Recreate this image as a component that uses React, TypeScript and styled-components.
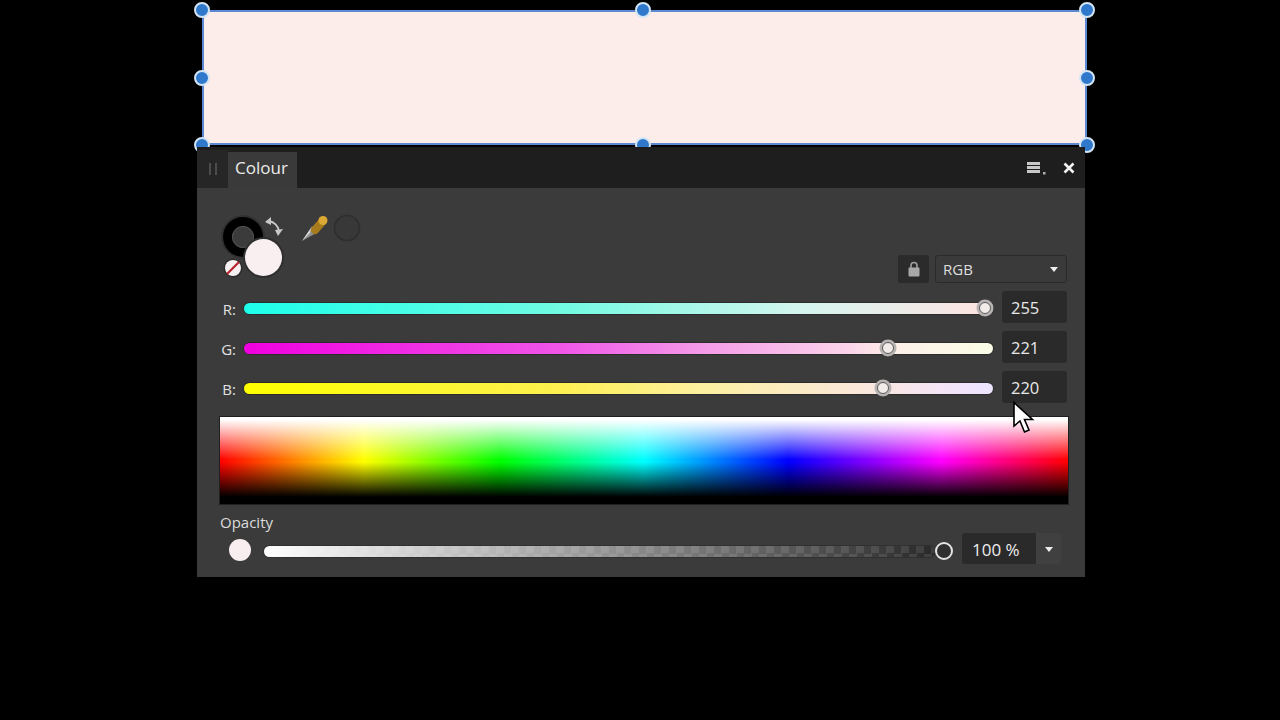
import React from "react";
import styled, { createGlobalStyle } from "styled-components";

const GlobalStyle = createGlobalStyle`
  html, body {
    margin: 0;
    padding: 0;
    background: #000;
    overflow: hidden;
  }
  body {
    font-family: "Open Sans", "Noto Sans", "Liberation Sans", sans-serif;
  }
`;

const Stage = styled.div`
  width: 1280px;
  height: 720px;
  padding: 10px 0 0 197px;
  box-sizing: border-box;
  background: #000;
  position: relative;
  overflow: hidden;
`;

const Shape = styled.div`
  position: relative;
  margin-left: 5px;
  width: 885px;
  height: 135px;
  background: #fcedeb;
  box-shadow: inset 0 0 0 2px #5b8ad2;
`;

const Handle = styled.span<{ $x: number; $y: number }>`
  position: absolute;
  left: ${({ $x }) => $x}%;
  top: ${({ $y }) => $y}%;
  width: 12px;
  height: 12px;
  transform: translate(-50%, -50%);
  border-radius: 50%;
  background: #2f78cb;
  border: 2px solid #d4e5f6;
`;

const Panel = styled.section`
  position: relative;
  z-index: 1;
  margin-top: 2px;
  width: 888px;
  height: 430px;
  background: #3b3b3b;
  color: #e6e6e6;
`;

const PanelHeader = styled.header`
  display: flex;
  align-items: stretch;
  height: 41px;
  box-sizing: border-box;
  background: #1e1e1e;
`;

const Grip = styled.div`
  width: 31px;
  margin-top: 3px;
  background: #262626;
  display: flex;
  align-items: center;
  justify-content: center;
  gap: 4px;
  i {
    width: 2px;
    height: 12px;
    background: #4c4c4c;
  }
`;

const Tab = styled.div`
  width: 69px;
  margin-top: 5px;
  box-sizing: border-box;
  padding-left: 7px;
  background: #3a3a3a;
  font-size: 17px;
  line-height: 31px;
  color: #ececec;
`;

const HeaderTools = styled.div`
  margin-left: auto;
  padding-right: 10px;
  display: flex;
  align-items: center;
  gap: 17px;
`;

const PanelBody = styled.div`
  padding: 24px 17px 0 23px;
`;

const TopRow = styled.div`
  display: flex;
  justify-content: space-between;
  align-items: flex-end;
  height: 71px;
  margin-bottom: 8px;
`;

const ModeControls = styled.div`
  display: flex;
  align-items: center;
  gap: 6px;
  height: 28px;
  margin-right: 1px;
`;

const LockButton = styled.div`
  width: 31px;
  height: 28px;
  border-radius: 2px;
  background: #2b2b2b;
  display: flex;
  align-items: center;
  justify-content: center;
`;

const ModeSelect = styled.div`
  box-sizing: border-box;
  width: 132px;
  height: 28px;
  padding: 0 8px 0 7px;
  border-radius: 3px;
  background: #3a3a3a;
  border: 1px solid #2a2a2a;
  display: flex;
  align-items: center;
  justify-content: space-between;
  font-size: 15px;
  color: #dedede;
`;

const Caret = styled.span`
  width: 0;
  height: 0;
  border-left: 4.5px solid transparent;
  border-right: 4.5px solid transparent;
  border-top: 5px solid #eee;
`;

const Sliders = styled.div`
  display: flex;
  flex-direction: column;
  gap: 8px;
`;

const SliderRow = styled.div`
  display: grid;
  grid-template-columns: 16px 749px 66px;
  column-gap: 8px;
  align-items: center;
  height: 32px;
`;

const ChannelLabel = styled.label`
  text-align: right;
  font-size: 15px;
  color: #e2e2e2;
  padding-top: 4px;
`;

const Track = styled.div<{ $stops: string }>`
  position: relative;
  height: 11px;
  margin-top: 2px;
  border-radius: 6px;
  background: linear-gradient(to right, ${({ $stops }) => $stops});
  box-shadow: 0 0 0 1px rgba(0, 0, 0, 0.25);
`;

const Thumb = styled.span`
  position: absolute;
  top: 50%;
  width: 10px;
  height: 10px;
  transform: translate(-50%, -50%);
  border-radius: 50%;
  background: #f1ece9;
  border: 1.5px solid #5a5a5a;
  box-shadow: 0 0 0 2.5px #b8b4b4;
`;

const ValueBox = styled.div`
  box-sizing: border-box;
  height: 32px;
  margin-left: 1px;
  padding-left: 9px;
  border-radius: 3px;
  background: #2a2a2a;
  font-size: 16.5px;
  line-height: 33px;
  color: #e8e8e8;
`;

const Spectrum = styled.div`
  margin-top: 14px;
  height: 87px;
  box-sizing: border-box;
  box-shadow: 0 0 0 1px #202020;
  background:
    linear-gradient(to bottom, #fff 3%, rgba(255, 255, 255, 0) 49%, rgba(0, 0, 0, 0) 52%, #000 92%),
    linear-gradient(
      to right,
      #f00 0%,
      #ff0 17%,
      #0f0 33%,
      #0ff 50%,
      #00f 67%,
      #f0f 85%,
      #f00 100%
    );
`;

const OpacityLabel = styled.div`
  margin-top: 9px;
  height: 20px;
  font-size: 15px;
  line-height: 19px;
  color: #dcdcdc;
`;

const OpacityRow = styled.div`
  display: flex;
  align-items: center;
  height: 31px;
  padding-left: 9px;
`;

const OpacitySwatch = styled.span`
  width: 22px;
  height: 22px;
  margin-top: 2px;
  border-radius: 50%;
  background: #f8edef;
  flex: none;
`;

const OpacityTrack = styled.div`
  position: relative;
  margin: 6px 0 0 13px;
  width: 671px;
  height: 11px;
  border-radius: 6px;
  box-shadow: 0 0 0 1px #303030;
  background:
    linear-gradient(to right, #fff 0%, rgba(255, 255, 255, 0) 100%),
    repeating-conic-gradient(#3e3e3e 0% 25%, #2a2a2a 0% 50%) 0 0 / 15px 15px;
`;

const OpacityThumb = styled.span`
  position: absolute;
  right: -18px;
  top: 50%;
  width: 14px;
  height: 14px;
  transform: translateY(calc(-50% - 1px));
  border-radius: 50%;
  background: #303030;
  border: 2px solid #e4e4e4;
`;

const OpacityValue = styled.div`
  margin-left: 27px;
  display: flex;
  height: 31px;
  border-radius: 3px;
  overflow: hidden;
`;

const OpacityNumber = styled.div`
  width: 74px;
  box-sizing: border-box;
  padding-left: 10px;
  background: #2a2a2a;
  font-size: 17px;
  line-height: 33px;
  color: #eee;
`;

const OpacityDrop = styled.div`
  width: 25px;
  padding-top: 2px;
  box-sizing: border-box;
  background: #404040;
  display: flex;
  align-items: center;
  justify-content: center;
`;

const Pointer = styled.svg`
  position: absolute;
  left: 1012px;
  top: 401px;
  z-index: 2;
`;

const handles = [
  [0, 0],
  [49.8, 0],
  [100, 0],
  [0, 50],
  [100, 50],
  [0, 100],
  [49.8, 100],
  [100, 100],
];

const channels = [
  {
    name: "R",
    value: 255,
    stops: "#1dffea 0%, #70fbe2 42%, #d4f5ee 74%, #ecebe8 88%, #ffe3e0 100%",
    at: 98.9,
  },
  {
    name: "G",
    value: 221,
    stops: "#f000e0 0%, #f055e8 42%, #f49ae8 61%, #fbd5ea 81%, #fdf0e8 87%, #fafde8 100%",
    at: 86,
  },
  {
    name: "B",
    value: 220,
    stops: "#ffff00 0%, #fdf050 42%, #fdf0a0 61%, #fbe8d8 81%, #f4e4f8 94%, #ece4ff 100%",
    at: 85.3,
  },
];

function ColourWell() {
  return (
    <svg width="142" height="70" viewBox="0 0 142 70">
      {/* stroke ring */}
      <circle cx="23" cy="24" r="21" fill="none" stroke="#303030" strokeWidth="1.5" />
      <circle cx="23" cy="24" r="15.5" fill="none" stroke="#000" strokeWidth="9" />
      <circle cx="23" cy="24" r="10.5" fill="#3b3b3b" stroke="#505050" strokeWidth="1" />
      {/* swap arrows */}
      <path d="M49 8 C54 9 58 13 59 18" fill="none" stroke="#c8c8c8" strokeWidth="2" />
      <path d="M45 9 L51 4 L51 12 Z M55 17 L63 16 L58 23 Z" fill="#c8c8c8" />
      {/* fill colour */}
      <circle cx="43.5" cy="44.5" r="20.5" fill="#2f2f2f" />
      <circle cx="43.5" cy="44.5" r="18.5" fill="#f9eef0" />
      {/* none swatch */}
      <circle cx="13" cy="55" r="9.5" fill="#2c2c2c" />
      <circle cx="13" cy="55" r="8" fill="#f6f0f0" />
      <path d="M7 61 L19 49" stroke="#b8212c" strokeWidth="2.2" />
      {/* eyedropper */}
      <path d="M82 28 L92 13 L98 19 Z" fill="#8f8f8f" />
      <path d="M82 28 L91 15 L90 20 Z" fill="#d8d8d8" />
      <path d="M95 17 L102 9" stroke="#a87c1c" strokeWidth="8" strokeLinecap="round" />
      <circle cx="103" cy="7.5" r="4.5" fill="#dcaa34" />
      {/* empty sample */}
      <circle cx="127" cy="15" r="12.5" fill="#383838" stroke="#2e2e2e" strokeWidth="1.6" />
    </svg>
  );
}

function MenuIcon() {
  return (
    <svg width="19" height="14" viewBox="0 0 19 14">
      <path d="M0 1h13v3H0zM0 5h13v3H0zM0 9h13v3H0z" fill="#c8c8c8" />
      <rect x="16" y="11" width="2.5" height="2.5" fill="#b0b0b0" />
    </svg>
  );
}

function CloseIcon() {
  return (
    <svg width="12" height="12" viewBox="0 0 12 12">
      <path d="M1.5 1.5L10.5 10.5M10.5 1.5L1.5 10.5" stroke="#f2f2f2" strokeWidth="2.6" />
    </svg>
  );
}

function LockIcon() {
  return (
    <svg width="12" height="16" viewBox="0 0 12 16">
      <path d="M3 7V4.5a3 3 0 0 1 6 0V7" fill="none" stroke="#a0a0a0" strokeWidth="1.6" />
      <rect x="0.5" y="6.5" width="11" height="9" rx="1" fill="#a8a8a8" />
    </svg>
  );
}

export default function App() {
  return (
    <>
      <GlobalStyle />
      <Stage>
        <Shape>
          {handles.map(([x, y]) => (
            <Handle key={`${x}-${y}`} $x={x} $y={y} />
          ))}
        </Shape>
        <Panel>
          <PanelHeader>
            <Grip>
              <i />
              <i />
            </Grip>
            <Tab>Colour</Tab>
            <HeaderTools>
              <MenuIcon />
              <CloseIcon />
            </HeaderTools>
          </PanelHeader>
          <PanelBody>
            <TopRow>
              <ColourWell />
              <ModeControls>
                <LockButton>
                  <LockIcon />
                </LockButton>
                <ModeSelect>
                  RGB
                  <Caret />
                </ModeSelect>
              </ModeControls>
            </TopRow>
            <Sliders>
              {channels.map((c) => (
                <SliderRow key={c.name}>
                  <ChannelLabel>{c.name}:</ChannelLabel>
                  <Track $stops={c.stops}>
                    <Thumb style={{ left: `${c.at}%` }} />
                  </Track>
                  <ValueBox>{c.value}</ValueBox>
                </SliderRow>
              ))}
            </Sliders>
            <Spectrum />
            <OpacityLabel>Opacity</OpacityLabel>
            <OpacityRow>
              <OpacitySwatch />
              <OpacityTrack>
                <OpacityThumb />
              </OpacityTrack>
              <OpacityValue>
                <OpacityNumber>100 %</OpacityNumber>
                <OpacityDrop>
                  <Caret />
                </OpacityDrop>
              </OpacityValue>
            </OpacityRow>
          </PanelBody>
        </Panel>
        <Pointer width="24" height="34" viewBox="0 0 24 34">
          <path
            d="M2 1.5 L2 25 L8 20 L12.5 31 L17 29 L12.5 18.5 L20.5 18.5 Z"
            fill="#fff"
            stroke="#000"
            strokeWidth="1.6"
          />
        </Pointer>
      </Stage>
    </>
  );
}
